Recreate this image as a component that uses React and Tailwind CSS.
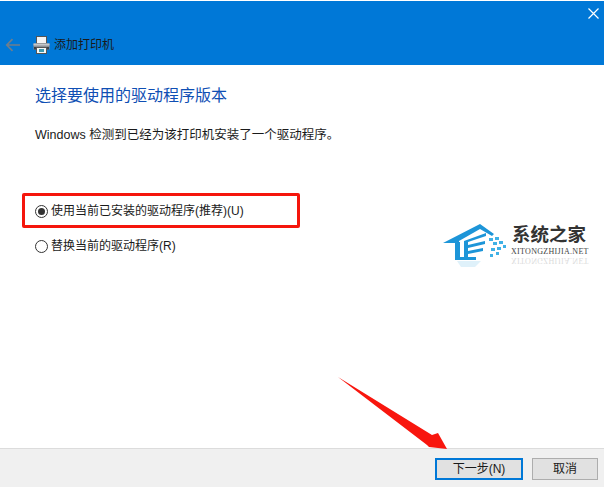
import { useState } from 'react'

const FONT = "font-['Liberation_Sans','Noto_Sans_CJK_SC',sans-serif]"

function BackArrow() {
  return (
    <svg width="16" height="14" viewBox="0 0 16 14" fill="none" stroke="#6f7e8c" strokeWidth="1.7">
      <path d="M15 7H2M7.5 1.2L1.8 7l5.7 5.8" />
    </svg>
  )
}

function PrinterIcon() {
  return (
    <svg width="17" height="18" viewBox="0 0 17 18">
      <rect x="3.5" y="0.5" width="10" height="7" fill="#f4f4f4" stroke="#555" />
      <path d="M0.5 7.5h16v6h-16z" fill="#8d9196" />
      <path d="M0.5 7.5h16v2h-16z" fill="#c4c7ca" />
      <rect x="1" y="11" width="15" height="2.5" fill="#3c4248" />
      <rect x="3.5" y="11.5" width="10" height="6" fill="#f7f7f7" stroke="#555" />
      <rect x="6" y="13" width="5" height="3" fill="#3f9bb0" />
    </svg>
  )
}

function Radio({ checked, label, onSelect }) {
  return (
    <label className="flex items-center gap-[3px] h-[20px] cursor-pointer" onClick={onSelect}>
      <span className="w-[13px] h-[13px] rounded-full border border-[#333] flex items-center justify-center bg-white">
        {checked && <span className="w-[7px] h-[7px] rounded-full bg-[#333]" />}
      </span>
      <span className="text-[12px] text-[#1a1a1a] leading-none">{label}</span>
    </label>
  )
}

function Watermark() {
  return (
    <div className="absolute left-[443px] top-[222px] w-[160px] h-[48px]">
      <svg className="absolute left-0 top-0" width="70" height="48" viewBox="0 0 70 48">
        {/* roof */}
        <path d="M0 21L37 2l14 10-2 2-12-7-21 12v2H8z" fill="#1d95d8" />
        {/* walls and bands */}
        <path d="M12 20h5v16h-5zM12 35h21v3H12z" fill="#1d95d8" />
        <path d="M21 19l22-8v3l-18 6v3l17-4v3l-17 4v3l15-3v3l-15 3v3h-4z" fill="#1d95d8" />
        <g fill="#3fb1e6">
          <rect x="46" y="16" width="4" height="3" />
          <rect x="52" y="15" width="4" height="3" />
          <rect x="50" y="20" width="4" height="3" />
          <rect x="56" y="19" width="4" height="3" />
          <rect x="60" y="23" width="3" height="3" />
          <rect x="54" y="25" width="4" height="3" />
          <rect x="48" y="26" width="4" height="3" />
          <rect x="53" y="30" width="3" height="3" />
          <rect x="47" y="32" width="3" height="3" />
        </g>
        <path d="M14 39h24l-6 6H18z" fill="#dff1fa" />
      </svg>
      <span className="absolute left-[69px] top-[1px] text-[18.5px] font-bold leading-[24px] text-[#333] whitespace-nowrap">系统之家</span>
      <span className="absolute left-[68px] top-[25px] text-[8px] leading-[10px] tracking-[0.3px] text-[#444] whitespace-nowrap font-['Liberation_Serif',serif]">XITONGZHIJIA.NET</span>
      <span className="absolute left-[68px] top-[33px] text-[8px] leading-[10px] tracking-[0.3px] text-[#444] opacity-20 -scale-y-100 whitespace-nowrap font-['Liberation_Serif',serif]">XITONGZHIJIA.NET</span>
    </div>
  )
}

function RedArrow() {
  return (
    <svg className="absolute left-[336px] top-[375px]" width="114" height="76" viewBox="0 0 114 76">
      <path d="M2 2L96 60l6-2 9 16-18-2-2-2z" fill="#f8160e" />
    </svg>
  )
}

export default function App() {
  const [choice, setChoice] = useState('current')

  return (
    <div className={`relative w-[604px] h-[492px] bg-white flex flex-col overflow-hidden ${FONT}`}>
      {/* title bar */}
      <div className="mt-px h-[64px] bg-[#0078d7] flex flex-col shrink-0">
        <div className="h-[32px] flex justify-end items-start pt-[7px] pr-[5px]">
          <svg width="11" height="11" viewBox="0 0 11 11" stroke="#fff" strokeWidth="1.2">
            <path d="M0.5 0.5l10 10M10.5 0.5l-10 10" />
          </svg>
        </div>
        <div className="flex items-center h-[24px] pl-[5px]">
          <BackArrow />
          <span className="ml-[12px]"><PrinterIcon /></span>
          <span className="ml-[4px] text-[12px] text-[#1a1a1a]">添加打印机</span>
        </div>
      </div>

      {/* body */}
      <div className="flex-1 pl-[35px] flex flex-col">
        <h1 className="mt-[21px] h-[20px] text-[16px] leading-[20px] font-normal text-[#0f4fb4]">选择要使用的驱动程序版本</h1>
        <p className="mt-[20px] h-[18px] text-[12.5px] leading-[18px] text-[#1a1a1a]">Windows 检测到已经为该打印机安装了一个驱动程序。</p>
        <div className="mt-[57px] flex flex-col gap-[15px]">
          <Radio checked={choice === 'current'} onSelect={() => setChoice('current')} label="使用当前已安装的驱动程序(推荐)(U)" />
          <Radio checked={choice === 'replace'} onSelect={() => setChoice('replace')} label="替换当前的驱动程序(R)" />
        </div>
      </div>

      {/* footer */}
      <div className="h-[39px] mb-[5px] bg-[#f0f0f0] border-t border-[#dcdcdc] flex items-start justify-end gap-[9px] pt-[9px] pr-[6px] shrink-0">
        <button className="w-[88px] h-[22px] bg-[#e1e1e1] border-2 border-[#0078d7] text-[12px] text-[#1a1a1a] leading-none">下一步(N)</button>
        <button className="w-[66px] h-[22px] bg-[#e1e1e1] border border-[#adadad] text-[12px] text-[#1a1a1a] leading-none">取消</button>
      </div>

      {/* annotations on top of the screenshot */}
      <div className="absolute left-[22px] top-[193px] w-[278px] h-[35px] border-[3px] border-[#f5160c] rounded-[2px]" />
      <Watermark />
      <RedArrow />
    </div>
  )
}
